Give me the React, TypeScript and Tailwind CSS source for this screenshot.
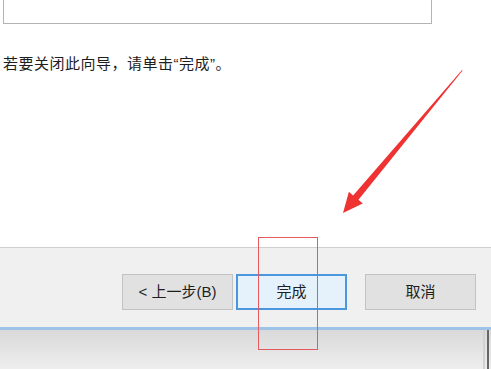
import React from "react";

const font = { fontFamily: '"Liberation Sans", "Noto Sans CJK SC", sans-serif' };

const WizardButton = ({ label, primary = false, className = "" }: { label: string; primary?: boolean; className?: string }) => (
  <button
    className={
      primary
        ? `w-[111px] h-[36px] bg-[#e5f1fb] border-2 border-[#4a97de] text-[15px] text-[#1e1e1e] ${className}`
        : `w-[111px] h-[36px] bg-[#e1e1e1] border border-[#c2c2c2] text-[15px] text-[#1e1e1e] ${className}`
    }>
    {label}
  </button>
);

const App = () => {
  return (
    <div className="relative w-[491px] h-[369px] overflow-hidden bg-white flex flex-col" style={font}>
      {/* list box (scrolled off the top) */}
      <div className="ml-[3px] w-[429px] h-[24px] border-x border-b border-[#b3b3b3] shrink-0" />

      <p className="mt-[30px] pl-[3px] text-[15px] leading-[20px] tracking-[0.5px] text-[#1e1e1e] shrink-0">
        若要关闭此向导，请单击“完成”。
      </p>

      <div className="flex-1" />

      {/* footer */}
      <div className="h-[80px] shrink-0 bg-[#f0f0f0] border-t border-[#cfcfcf] pt-[26px] pr-[15px] flex justify-end items-start">
        <WizardButton label="< 上一步(B)" />
        <WizardButton label="完成" primary className="ml-[3px]" />
        <WizardButton label="取消" className="ml-[18px]" />
      </div>

      {/* window edge below */}
      <div className="h-[3px] shrink-0 bg-[#9dc4e8]" />
      <div className="h-[39px] shrink-0 bg-gradient-to-b from-[#d9d9d9] to-[#eeeeee] flex justify-end">
        <div className="w-[2px] bg-[#d2d2d2]" />
        <div className="w-[2px]" />
        <div className="w-[2px] bg-[#666]" />
        <div className="w-[2px]" />
      </div>

      {/* red highlight box */}
      <div className="absolute left-[258px] top-[237px] w-[60px] h-[113px] border-[1.5px] border-[#e55a5e]" />

      {/* red arrow */}
      <svg className="absolute left-0 top-0 pointer-events-none" width="491" height="369" viewBox="0 0 491 369">
        <polygon
          points="462,70 462.6,70.6 358.5,199.8 362.7,203.4 343,213 348.9,191.8 353.1,195.4"
          fill="#ef3333"
        />
      </svg>
    </div>
  );
};

export default App;
